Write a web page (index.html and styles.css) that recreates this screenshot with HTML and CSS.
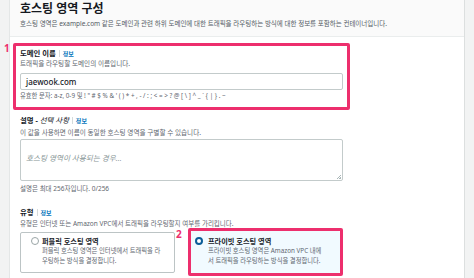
FILE: index.html
```html
<!DOCTYPE html>
<html lang="ko">
<head>
    <meta charset="UTF-8">
    <meta name="viewport" content="width=device-width, initial-scale=1.0">
    <title>호스팅 영역 구성</title>
    <link rel="stylesheet" href="styles.css">
</head>
<body>
    <div class="panel">
        <div class="panel-header">
            <h2>호스팅 영역 구성</h2>
            <p>호스팅 영역은 example.com 같은 도메인과 관련 하위 도메인에 대한 트래픽을 라우팅하는 방식에 대한 정보를 포함하는 컨테이너입니다.</p>
        </div>

        <div class="panel-body">
            <!-- 도메인 이름 -->
            <div class="field highlight">
                <span class="marker">1</span>
                <div class="label">도메인 이름 <span class="sep"></span><a class="info">정보</a></div>
                <div class="desc">트래픽을 라우팅할 도메인의 이름입니다.</div>
                <div class="input">jaewook.com</div>
                <div class="hint">유효한 문자: a-z, 0-9 및 ! " # $ % &amp; ' ( ) * + , - / : ; &lt; = &gt; ? @ [ \ ] ^ _ ` { | } . ~</div>
            </div>

            <!-- 설명 -->
            <div class="field field-desc">
                <div class="label">설명 - <i>선택 사항</i> <span class="sep"></span><a class="info">정보</a></div>
                <div class="desc">이 값을 사용하면 이름이 동일한 호스팅 영역을 구별할 수 있습니다.</div>
                <div class="textarea"><span class="placeholder">호스팅 영역이 사용되는 경우...</span><span class="grip"></span></div>
                <div class="hint count">설명은 최대 256자입니다. 0/256</div>
            </div>

            <!-- 유형 -->
            <div class="field field-type">
                <div class="label">유형 <span class="sep"></span><a class="info">정보</a></div>
                <div class="desc">유형은 인터넷 또는 Amazon VPC에서 트래픽을 라우팅할지 여부를 가리킵니다.</div>
                <div class="cards">
                    <div class="card">
                        <span class="radio"></span>
                        <div>
                            <div class="card-title">퍼블릭 호스팅 영역</div>
                            <div class="card-desc">퍼블릭 호스팅 영역은 인터넷에서 트래픽을 라<br>우팅하는 방식을 결정합니다.</div>
                        </div>
                    </div>
                    <div class="card-frame">
                        <span class="marker marker-2">2</span>
                        <div class="card selected">
                            <span class="radio checked"></span>
                            <div>
                                <div class="card-title">프라이빗 호스팅 영역</div>
                                <div class="card-desc">프라이빗 호스팅 영역은 Amazon VPC 내에<br>서 트래픽을 라우팅하는 방식을 결정합니다.</div>
                            </div>
                        </div>
                    </div>
                </div>
            </div>
        </div>
    </div>
</body>
</html>
```

FILE: styles.css
```css
body {
    margin: 0;
    background: #f2f3f3;
    font-family: "Noto Sans", "Noto Sans CJK KR", sans-serif;
    color: #16191f;
}

.panel {
    box-sizing: border-box;
    margin-left: 9px;
    width: 456px;
    height: 278px;
    background: #fff;
    border-left: 1px solid #e4e7e7;
    border-right: 1px solid #dcdfdf;
}

.panel-header {
    box-sizing: border-box;
    height: 37px;
    padding: 2px 10px 0;
    background: #fafafa;
    border-bottom: 1px solid #eaeded;
}

.panel-header h2 {
    margin: 0;
    font-size: 12px;
    line-height: 14px;
    font-weight: 700;
}

.panel-header p {
    margin: 3px 0 0;
    font-size: 6.5px;
    line-height: 9px;
    color: #545b64;
    white-space: nowrap;
}

.panel-body {
    padding: 0 10px;
}

.field {
    width: 323px;
}

.highlight {
    position: relative;
    box-sizing: border-box;
    width: 337px;
    margin: 6px 0 0 -7px;
    padding: 2px 4px 7px;
    border: 3px solid #ed2f6d;
    border-radius: 2px;
}

.marker {
    position: absolute;
    left: -12px;
    top: -4px;
    font-size: 10px;
    line-height: 12px;
    font-weight: 700;
    color: #ed2f6d;
}

.label {
    font-size: 7.4px;
    line-height: 10px;
    font-weight: 700;
    white-space: nowrap;
}

.label i {
    font-weight: 400;
}

.sep {
    display: inline-block;
    width: 1px;
    height: 7px;
    margin: 0 3px 0 1px;
    background: #d5dbdb;
    vertical-align: -1px;
}

.info {
    font-size: 6px;
    color: #0073bb;
    font-weight: 700;
}

.desc {
    font-size: 6.6px;
    line-height: 9px;
    color: #5f6770;
    white-space: nowrap;
}

.input {
    box-sizing: border-box;
    height: 17px;
    margin-top: 5px;
    padding: 0 5px;
    border: 1px solid #c3cbcb;
    border-radius: 2px;
    font-size: 8px;
    line-height: 15px;
    font-weight: 500;
}

.hint {
    margin-top: 1px;
    font-size: 6.3px;
    line-height: 9px;
    color: #5f6770;
    white-space: nowrap;
}

.field-desc {
    margin-top: 5px;
}

.field-desc .desc {
    margin-top: 1.5px;
}

.textarea {
    position: relative;
    box-sizing: border-box;
    height: 42px;
    margin-top: 2.5px;
    padding: 4px 5px;
    border: 1px solid #c3cbcb;
    border-radius: 2px;
}

.placeholder {
    font-size: 7.6px;
    line-height: 10px;
    font-style: italic;
    color: #879596;
}

.grip {
    position: absolute;
    right: 1px;
    bottom: 1px;
    width: 4px;
    height: 4px;
    background: linear-gradient(135deg, transparent 45%, #aab7b8 45%, #aab7b8 55%, transparent 55%, transparent 75%, #aab7b8 75%);
}

.count {
    margin-top: 3px;
    font-size: 6.5px;
}

.field-type {
    margin-top: 14px;
}

.field-type .desc {
    margin-top: 1px;
    font-size: 6.5px;
}

.cards {
    display: flex;
    align-items: flex-start;
    gap: 13px;
    margin-top: 4px;
}

.card {
    box-sizing: border-box;
    display: flex;
    align-items: flex-start;
    gap: 3px;
    width: 155px;
    height: 41px;
    padding: 3px 4px 0 10px;
    border: 1px solid #bcc4c5;
    border-radius: 2px;
}

.card-frame {
    position: relative;
    box-sizing: border-box;
    width: 155px;
    height: 48px;
    margin-top: -4px;
    border: 3px solid #ed2f6d;
    border-radius: 2px;
}

.marker-2 {
    left: -15px;
    top: -3px;
}

.card.selected {
    width: 100%;
    height: 100%;
    padding: 5px 2px 0 4px;
    gap: 5px;
    border: none;
    background: #f1faff;
}

.radio {
    box-sizing: border-box;
    flex: none;
    width: 8px;
    height: 8px;
    margin-top: 1px;
    border: 1px solid #9aa5a6;
    border-radius: 50%;
    background: #fff;
}

.radio.checked {
    border: 2.5px solid #0b5d99;
}

.card-title {
    font-size: 7.2px;
    line-height: 10px;
    font-weight: 700;
    white-space: nowrap;
}

.card-desc {
    font-size: 6.3px;
    line-height: 10px;
    color: #5f6770;
    white-space: nowrap;
}
```
